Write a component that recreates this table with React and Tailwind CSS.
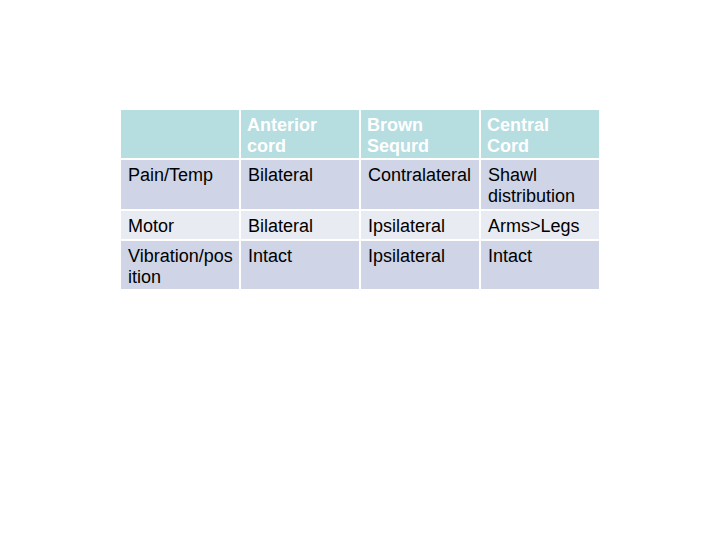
export default function App() {
  const header = ['', 'Anterior cord', 'Brown Sequrd', 'Central Cord'];
  const rows = [
    { bg: 'bg-[#cfd5e6]', cells: ['Pain/Temp', 'Bilateral', 'Contralateral', 'Shawl distribution'] },
    { bg: 'bg-[#e9ebf3]', cells: ['Motor', 'Bilateral', 'Ipsilateral', 'Arms>Legs'] },
    { bg: 'bg-[#cfd5e6]', cells: [<>Vibration/pos<br />ition</>, 'Intact', 'Ipsilateral', 'Intact'] },
  ];

  return (
    <div
      className="w-[720px] h-[540px] bg-white pl-[121px] pt-[110px]"
      style={{ fontFamily: '"Liberation Sans", Arial, sans-serif' }}
    >
      <div className="grid grid-cols-[118px_118px_118px_118px] grid-rows-[48px_49px_28px_48px] gap-[2px] w-[478px] text-[18px] leading-[21px]">
        {header.map((h, i) => (
          <div key={'h' + i} className="bg-[#b6dde0] text-white font-bold pl-[6px] pr-[4px] pt-[5px]">
            {h}
          </div>
        ))}
        {rows.map((r, ri) =>
          r.cells.map((c, ci) => (
            <div key={ri + '-' + ci} className={`${r.bg} text-black pl-[7px] pr-[4px] pt-[5px]`}>
              {c}
            </div>
          ))
        )}
      </div>
    </div>
  );
}
